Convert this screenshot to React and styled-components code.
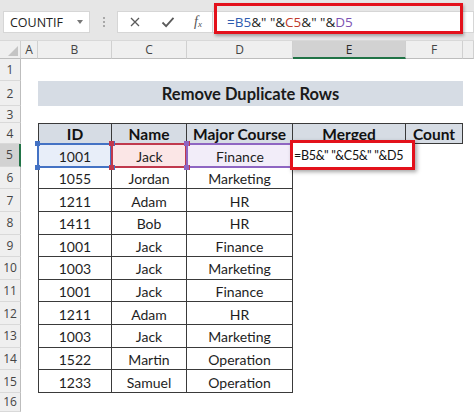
import React from 'react';
import styled, { createGlobalStyle, css } from 'styled-components';

const rows = [
  ['1055', 'Jordan', 'Marketing'],
  ['1211', 'Adam', 'HR'],
  ['1411', 'Bob', 'HR'],
  ['1001', 'Jack', 'Finance'],
  ['1003', 'Jack', 'Marketing'],
  ['1001', 'Jack', 'Finance'],
  ['1211', 'Adam', 'HR'],
  ['1003', 'Jack', 'Marketing'],
  ['1522', 'Martin', 'Operation'],
  ['1233', 'Samuel', 'Operation'],
];

const letters = ['A', 'B', 'C', 'D', 'E', 'F', ''];

const tones = {
  blue: { line: '#4472c4', fill: '#e8eef9' },
  red: { line: '#c0394d', fill: '#fbe6e6' },
  purple: { line: '#8e65c2', fill: '#f2edf9' },
};

function App() {
  return (
    <>
      <GlobalStyle />
      <Page>
        <TopBar>
          <NameBox>
            COUNTIF
            <Caret />
          </NameBox>
          <Grip>
            <span /><span /><span />
          </Grip>
          <ButtonBox>
            <svg width="12" height="12" viewBox="0 0 12 12">
              <path d="M2 2l8 8M10 2l-8 8" stroke="#5a5a5a" strokeWidth="1.3" fill="none" />
            </svg>
            <svg width="14" height="12" viewBox="0 0 14 12">
              <path d="M1.5 6.5l3.6 3.6L12.5 1.8" stroke="#5a5a5a" strokeWidth="1.8" fill="none" />
            </svg>
            <Fx>f<sub>x</sub></Fx>
          </ButtonBox>
          <FormulaBox>
            <Ref $c="#2f5cb0">=B5</Ref>&amp;" "&amp;<Ref $c="#c0392b">C5</Ref>&amp;" "&amp;<Ref $c="#7d52b3">D5</Ref>
            <BarFrame />
          </FormulaBox>
        </TopBar>

        <Sheet>
          <Corner />
          {letters.map((l, i) => (
            <ColHead key={i} $selected={l === 'E'}>{l}</ColHead>
          ))}

          {/* row 1 */}
          <RowHead>1</RowHead>
          {letters.map((_, i) => <Blank key={i} />)}

          {/* row 2 */}
          <RowHead>2</RowHead>
          <Blank />
          <Title>Remove Duplicate Rows</Title>
          <Blank />

          {/* row 3 */}
          <RowHead>3</RowHead>
          {letters.map((_, i) => <Blank key={i} />)}

          {/* row 4 */}
          <RowHead>4</RowHead>
          <Blank />
          {['ID', 'Name', 'Major Course', 'Merged', 'Count'].map((h, i) => (
            <HeadCell key={h} $first={i === 0}>{h}</HeadCell>
          ))}
          <Blank />

          {/* row 5 */}
          <RowHead $selected>5</RowHead>
          <Blank />
          <SelCell $tone="blue">1001<Handles $tone="blue" /></SelCell>
          <SelCell $tone="red">Jack<Handles $tone="red" /></SelCell>
          <SelCell $tone="purple">Finance<Handles $tone="purple" /></SelCell>
          <EditCell>
            <CellFrame>=B5&amp;" "&amp;C5&amp;" "&amp;D5</CellFrame>
          </EditCell>
          <Blank />
          <Blank />

          {rows.map((r, n) => (
            <React.Fragment key={n}>
              <RowHead>{n + 6}</RowHead>
              <Blank />
              <DataCell $first>{r[0]}</DataCell>
              <DataCell>{r[1]}</DataCell>
              <DataCell>{r[2]}</DataCell>
              <Blank />
              <Blank />
              <Blank />
            </React.Fragment>
          ))}

          <RowHead>16</RowHead>
          {letters.map((_, i) => <Blank key={i} />)}
        </Sheet>
      </Page>
    </>
  );
}

function Handles({ $tone }) {
  return (
    <>
      <Dot $tone={$tone} $top $left />
      <Dot $tone={$tone} $top />
      <Dot $tone={$tone} $left />
      <Dot $tone={$tone} />
    </>
  );
}

export default App;

const GlobalStyle = createGlobalStyle`
  html, body {
    margin: 0;
    padding: 0;
    background: #fff;
  }
  body {
    font-family: Lato, "Open Sans", sans-serif;
  }
`;

const Page = styled.div`
  width: 474px;
  height: 412px;
  overflow: hidden;
  background: #fff;
`;

const TopBar = styled.div`
  height: 41px;
  box-sizing: border-box;
  padding: 11px 0 0 3px;
  display: flex;
  align-items: flex-start;
  background: #e6e6e6;
  border-bottom: 1px solid #d8d8d8;
`;

const NameBox = styled.div`
  width: 87px;
  height: 22px;
  box-sizing: border-box;
  padding: 0 6px;
  display: flex;
  align-items: center;
  justify-content: space-between;
  background: #fff;
  border: 1px solid #d6d6d6;
  font-family: "Open Sans", sans-serif;
  font-size: 12.5px;
  color: #222;
`;

const Caret = styled.span`
  width: 0;
  height: 0;
  border-left: 3.5px solid transparent;
  border-right: 3.5px solid transparent;
  border-top: 4px solid #777;
`;

const Grip = styled.div`
  width: 27px;
  height: 22px;
  display: flex;
  flex-direction: column;
  align-items: center;
  justify-content: center;
  gap: 2px;

  span {
    width: 2px;
    height: 2px;
    background: #a8a8a8;
  }
`;

const ButtonBox = styled.div`
  width: 95px;
  height: 22px;
  box-sizing: border-box;
  padding: 0 10px 0 11px;
  display: flex;
  align-items: center;
  justify-content: space-between;
  background: #fff;
  border: 1px solid #d6d6d6;
  border-right: none;
`;

const Fx = styled.span`
  font-family: "Liberation Serif", serif;
  font-style: italic;
  font-size: 14px;
  color: #555;
  line-height: 1;

  sub {
    font-size: 9px;
    vertical-align: -1px;
  }
`;

const FormulaBox = styled.div`
  position: relative;
  flex: 1;
  height: 22px;
  box-sizing: border-box;
  padding-left: 14px;
  display: flex;
  align-items: center;
  background: #fff;
  border: 1px solid #d6d6d6;
  font-family: "Open Sans", sans-serif;
  font-size: 13.5px;
  color: #222;
  white-space: pre;
`;

const Ref = styled.span`
  color: ${(p) => p.$c};
`;

const BarFrame = styled.div`
  position: absolute;
  left: 1px;
  top: -9px;
  width: 249px;
  height: 31px;
  box-sizing: border-box;
  border: 3.5px solid #e3111b;
  box-shadow: 1px 2px 3px rgba(0, 0, 0, 0.3);
  pointer-events: none;
`;

const Sheet = styled.div`
  display: grid;
  grid-template-columns: 21px 17px 74px 75px 106px 113px 57px 1fr;
  grid-template-rows: 18px 22px 25px 17px 21px repeat(11, 22.64px) 1fr;
  height: 371px;
  overflow: hidden;
  font-size: 14px;
  color: #1e1e1e;
`;

const Corner = styled.div`
  position: relative;
  background: #efefef;
  border-right: 1px solid #cfcfcf;
  border-bottom: 1px solid #bdbdbd;

  &::after {
    content: '';
    position: absolute;
    right: 2px;
    bottom: 2px;
    border-left: 10px solid transparent;
    border-bottom: 10px solid #c4c4c4;
  }
`;

const ColHead = styled.div`
  display: flex;
  align-items: center;
  justify-content: center;
  background: ${(p) => (p.$selected ? '#d2d2d2' : '#efefef')};
  border-right: 1px solid #d0d0d0;
  border-bottom: ${(p) => (p.$selected ? '2px solid #217346' : '1px solid #bdbdbd')};
  font-family: "Open Sans", sans-serif;
  font-size: 12px;
  color: ${(p) => (p.$selected ? '#2a2a2a' : '#444')};
`;

const RowHead = styled.div`
  display: flex;
  align-items: center;
  justify-content: center;
  background: ${(p) => (p.$selected ? '#d2d2d2' : '#efefef')};
  border-right: ${(p) => (p.$selected ? '2px solid #217346' : '1px solid #bdbdbd')};
  border-bottom: 1px solid #d9d9d9;
  font-family: "Open Sans", sans-serif;
  font-size: 12px;
  color: #444;
`;

const Blank = styled.div``;

const centred = css`
  display: flex;
  align-items: center;
  justify-content: center;
  white-space: nowrap;
`;

const Title = styled.div`
  ${centred};
  grid-column: span 5;
  background: #d6dce4;
  font-weight: 700;
  font-size: 16.5px;
  color: #1a1a1a;
`;

const HeadCell = styled.div`
  ${centred};
  background: #d6dce4;
  border-top: 1px solid #3a3a3a;
  border-bottom: 1px solid #3a3a3a;
  border-right: 1px solid #3a3a3a;
  border-left: ${(p) => (p.$first ? '1px solid #3a3a3a' : 'none')};
  font-weight: 700;
  font-size: 15.5px;
  color: #111;
`;

const DataCell = styled.div`
  ${centred};
  padding-top: 2px;
  border-bottom: 1px solid #3a3a3a;
  border-right: 1px solid #3a3a3a;
  border-left: ${(p) => (p.$first ? '1px solid #3a3a3a' : 'none')};
`;

const SelCell = styled.div`
  ${centred};
  position: relative;
  padding-top: 2px;
  background: ${(p) => tones[p.$tone].fill};

  &::after {
    content: '';
    position: absolute;
    inset: -1px 0 -1px -1px;
    border: 2px solid ${(p) => tones[p.$tone].line};
  }
`;

const Dot = styled.span`
  position: absolute;
  z-index: 2;
  width: 5px;
  height: 5px;
  background: ${(p) => tones[p.$tone].line};
  ${(p) => (p.$top ? 'top: -3px;' : 'bottom: -3px;')}
  ${(p) => (p.$left ? 'left: -3px;' : 'right: -3px;')}
`;

const EditCell = styled.div`
  position: relative;
  z-index: 3;
`;

const CellFrame = styled.div`
  position: absolute;
  left: -3px;
  top: -4px;
  width: 125px;
  height: 30px;
  box-sizing: border-box;
  padding: 1px 0 0 1px;
  display: flex;
  align-items: center;
  background: #fff;
  border: 3px solid #e3111b;
  box-shadow: 2px 2px 4px rgba(0, 0, 0, 0.35);
  font-size: 12.5px;
  letter-spacing: -0.3px;
  color: #111;
  white-space: pre;
`;
